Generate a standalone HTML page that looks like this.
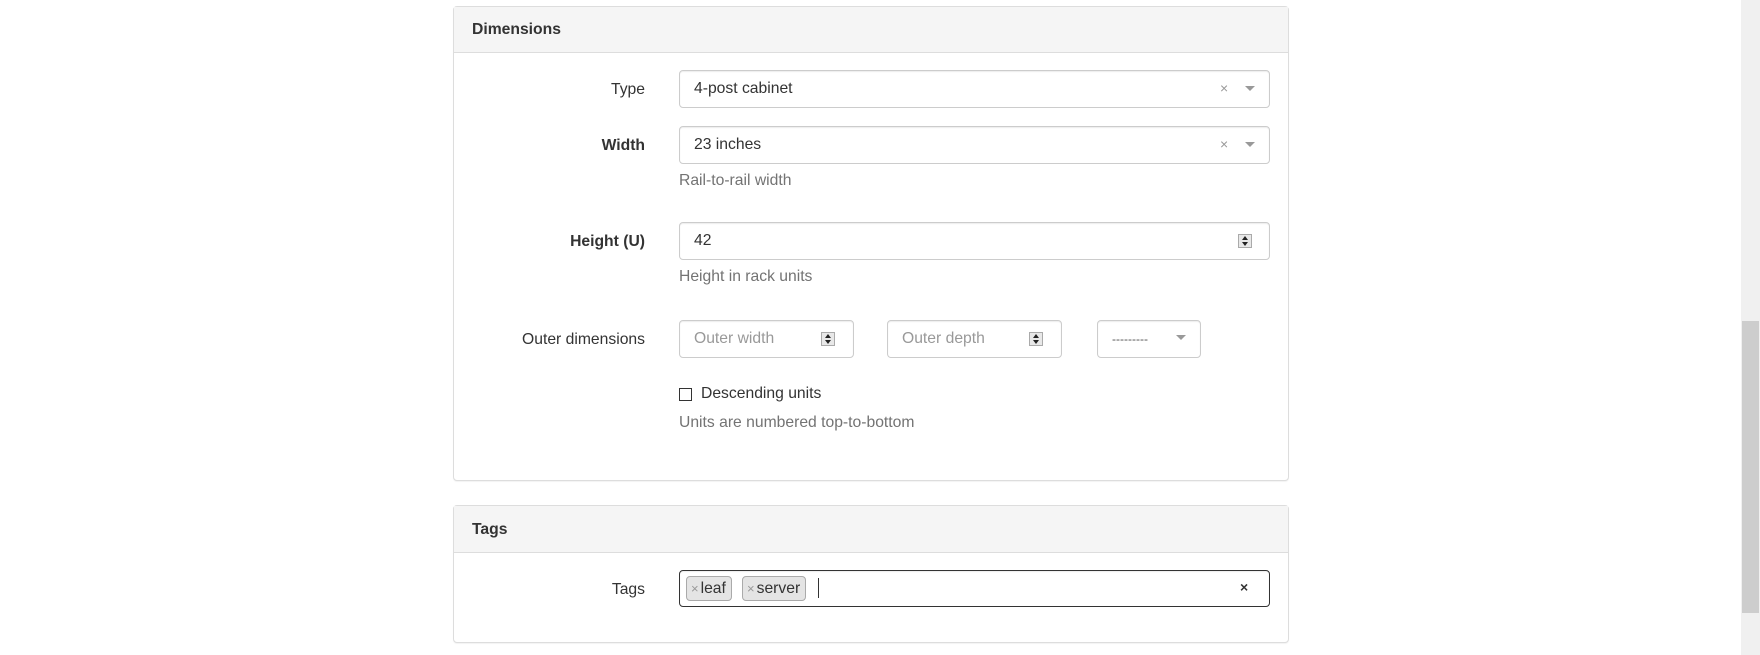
<!DOCTYPE html>
<html><head><style>
body{margin:0;width:1760px;height:655px;background:#fff;font-family:"Liberation Sans",sans-serif;font-size:15.7px;color:#333;position:relative;overflow:hidden}
.panel{position:absolute;left:453px;width:834px;border:1px solid #ddd;border-radius:4px;background:#fff;box-shadow:0 1px 1px rgba(0,0,0,.05)}
.ph{background:#f5f5f5;border-bottom:1px solid #ddd;font-weight:bold;padding:0 18px;box-sizing:border-box}
.a{position:absolute}
.lab{position:absolute;right:1115px;text-align:right;white-space:nowrap}
.inp{position:absolute;border:1px solid #ccc;border-radius:4px;box-sizing:border-box;box-shadow:inset 0 1px 1px rgba(0,0,0,.075);padding-left:14px;display:flex;align-items:center}
.help{position:absolute;left:679px;color:#737373}
.x{position:absolute;color:#999;font-size:14px}
.caret{position:absolute;width:0;height:0;border-left:5px solid transparent;border-right:5px solid transparent;border-top:5px solid #999}
.spin{position:absolute;width:14px;height:14px;border:1px solid #aaa;background:#e8e8e8;box-sizing:border-box}
.spin:before{content:"";position:absolute;left:3px;top:1px;border-left:3px solid transparent;border-right:3px solid transparent;border-bottom:4px solid #222}
.spin:after{content:"";position:absolute;left:3px;bottom:1px;border-left:3px solid transparent;border-right:3px solid transparent;border-top:4px solid #222}
.tag{position:absolute;top:5px;height:25px;background:#e4e4e4;border:1px solid #aaa;border-radius:4px;box-sizing:border-box;padding:0 5px 0 4px;line-height:23px}
.tag span{color:#999;font-size:13px;margin-right:2px}
</style></head><body>
<div class="panel" style="top:6px;height:473px"><div class="ph" style="height:46px;line-height:46px">Dimensions</div></div>
<div class="panel" style="top:505px;height:136px"><div class="ph" style="height:47px;line-height:47px">Tags</div></div>

<div class="lab" style="top:81px">Type</div>
<div class="inp" style="left:679px;top:70px;width:591px;height:38px">4-post cabinet</div>
<div class="x" style="left:1220px;top:80px">×</div><div class="caret" style="left:1245px;top:86px"></div>

<div class="lab" style="top:137px;font-weight:bold">Width</div>
<div class="inp" style="left:679px;top:126px;width:591px;height:38px">23 inches</div>
<div class="x" style="left:1220px;top:136px">×</div><div class="caret" style="left:1245px;top:142px"></div>
<div class="help" style="top:172px">Rail-to-rail width</div>

<div class="lab" style="top:233px;font-weight:bold">Height (U)</div>
<div class="inp" style="left:679px;top:222px;width:591px;height:38px">42</div>
<div class="spin" style="left:1238px;top:234px"></div>
<div class="help" style="top:268px">Height in rack units</div>

<div class="lab" style="top:331px">Outer dimensions</div>
<div class="inp" style="left:679px;top:320px;width:175px;height:38px;color:#999">Outer width</div>
<div class="spin" style="left:821px;top:332px"></div>
<div class="inp" style="left:887px;top:320px;width:175px;height:38px;color:#999">Outer depth</div>
<div class="spin" style="left:1029px;top:332px"></div>
<div class="inp" style="left:1097px;top:320px;width:104px;height:38px;color:#555;font-size:12px">---------</div>
<div class="caret" style="left:1176px;top:335px"></div>

<div class="a" style="left:679px;top:388px;width:13px;height:13px;border:1px solid #333;box-sizing:border-box"></div>
<div class="a" style="left:701px;top:385px">Descending units</div>
<div class="help" style="top:414px">Units are numbered top-to-bottom</div>

<div class="lab" style="top:581px">Tags</div>
<div class="inp" style="left:679px;top:570px;width:591px;height:37px;border-color:#333;padding:0">
<div class="tag" style="left:6px"><span>×</span>leaf</div>
<div class="tag" style="left:62px"><span>×</span>server</div>
<div class="a" style="left:138px;top:7px;width:1px;height:20px;background:#333"></div>
<div class="a" style="top:8px;font-weight:bold;font-size:14px;color:#333;left:560px">×</div>
</div>

<div class="a" style="left:1741px;top:0;width:19px;height:655px;background:#f0f0f0"></div>
<div class="a" style="left:1742px;top:321px;width:17px;height:292px;background:#cdcdcd"></div>
</body></html>
